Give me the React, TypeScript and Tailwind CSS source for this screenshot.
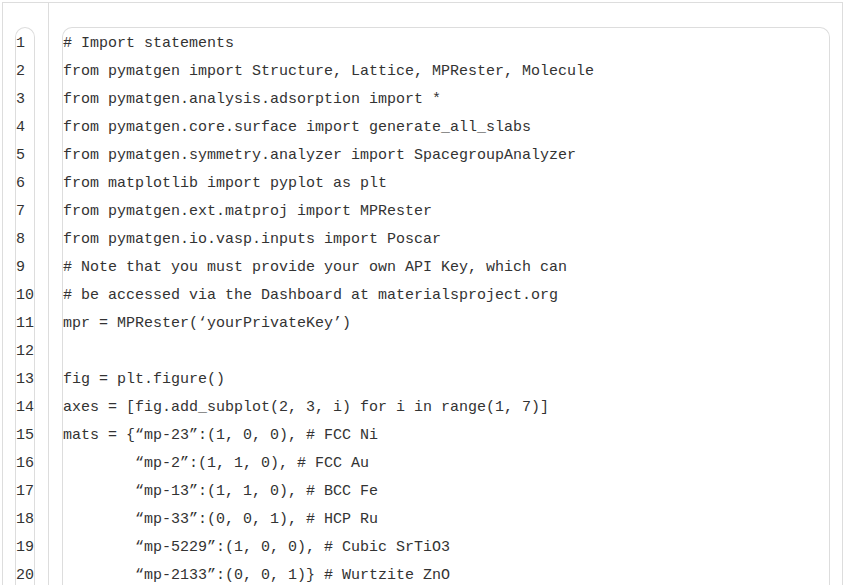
import React from 'react'

const CODE = [
  '# Import statements',
  'from pymatgen import Structure, Lattice, MPRester, Molecule',
  'from pymatgen.analysis.adsorption import *',
  'from pymatgen.core.surface import generate_all_slabs',
  'from pymatgen.symmetry.analyzer import SpacegroupAnalyzer',
  'from matplotlib import pyplot as plt',
  'from pymatgen.ext.matproj import MPRester',
  'from pymatgen.io.vasp.inputs import Poscar',
  '# Note that you must provide your own API Key, which can',
  '# be accessed via the Dashboard at materialsproject.org',
  'mpr = MPRester(\u2018yourPrivateKey\u2019)',
  '',
  'fig = plt.figure()',
  'axes = [fig.add_subplot(2, 3, i) for i in range(1, 7)]',
  'mats = {\u201Cmp-23\u201D:(1, 0, 0), # FCC Ni',
  '        \u201Cmp-2\u201D:(1, 1, 0), # FCC Au',
  '        \u201Cmp-13\u201D:(1, 1, 0), # BCC Fe',
  '        \u201Cmp-33\u201D:(0, 0, 1), # HCP Ru',
  '        \u201Cmp-5229\u201D:(1, 0, 0), # Cubic SrTiO3',
  '        \u201Cmp-2133\u201D:(0, 0, 1)} # Wurtzite ZnO',
]

const mono = "font-['Liberation_Mono',monospace] text-[15px] leading-[28px] text-[#333]"

export default function App() {
  return (
    <div className="w-[845px] h-[585px] overflow-hidden bg-white">
      <div className="mt-[2px] ml-[2px] w-[841px] h-[600px] flex border border-[#ddd]">
        {/* gutter with line numbers */}
        <div className="w-[46px] shrink-0 border-r border-[#ddd] pt-[24px] pl-[12px]">
          <div className={`w-[20px] h-full pt-[2px] rounded-t-[10px] border border-b-0 border-[#ddd] ${mono}`}>
            {CODE.map((_, i) => (
              <div key={i} className="whitespace-pre">{i + 1}</div>
            ))}
          </div>
        </div>

        {/* code */}
        <div className="flex-1 pt-[24px] pl-[13px] pr-[12px]">
          <div className={`h-full pt-[2px] rounded-t-[10px] border border-b-0 border-[#ddd] ${mono}`}>
            {CODE.map((line, i) => (
              <div key={i} className="whitespace-pre h-[28px]">{line}</div>
            ))}
          </div>
        </div>
      </div>
    </div>
  )
}
